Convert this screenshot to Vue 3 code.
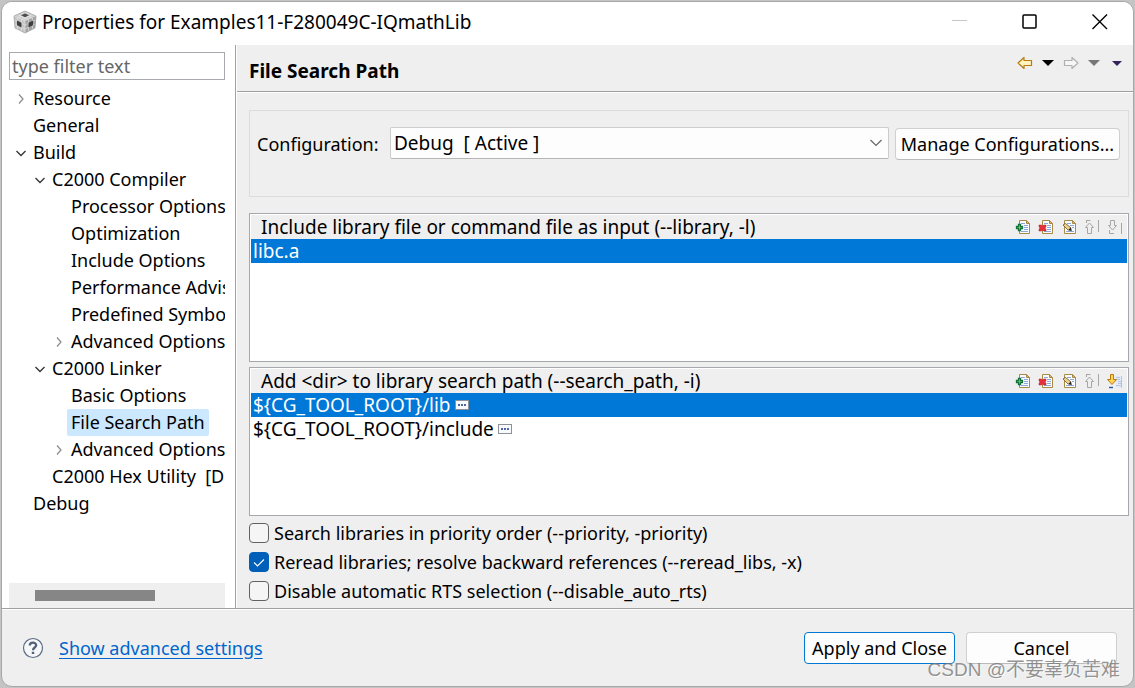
<script setup>
import { ref } from 'vue'

const filter = ref('')
const config = ref('debug')

const tree = [
  { label: 'Resource', level: 0, arrow: 'closed' },
  { label: 'General', level: 0 },
  { label: 'Build', level: 0, arrow: 'open' },
  { label: 'C2000 Compiler', level: 1, arrow: 'open' },
  { label: 'Processor Options', level: 2 },
  { label: 'Optimization', level: 2 },
  { label: 'Include Options', level: 2 },
  { label: 'Performance Advisor', level: 2 },
  { label: 'Predefined Symbols', level: 2 },
  { label: 'Advanced Options', level: 2, arrow: 'closed' },
  { label: 'C2000 Linker', level: 1, arrow: 'open' },
  { label: 'Basic Options', level: 2 },
  { label: 'File Search Path', level: 2, selected: true },
  { label: 'Advanced Options', level: 2, arrow: 'closed' },
  { label: 'C2000 Hex Utility \u00a0[Disabled]', level: 1 },
  { label: 'Debug', level: 0 },
]

const lists = [
  {
    title: 'Include library file or command file as input (--library, -l)',
    rows: [{ text: 'libc.a', selected: true }],
    canMoveDown: false,
  },
  {
    title: 'Add <dir> to library search path (--search_path, -i)',
    rows: [
      { text: '${CG_TOOL_ROOT}/lib', selected: true, variable: true },
      { text: '${CG_TOOL_ROOT}/include', variable: true },
    ],
    canMoveDown: true,
  },
]

const options = ref([
  { id: 'priority', label: 'Search libraries in priority order (--priority, -priority)', checked: false },
  { id: 'reread', label: 'Reread libraries; resolve backward references (--reread_libs, -x)', checked: true },
  { id: 'rts', label: 'Disable automatic RTS selection (--disable_auto_rts)', checked: false },
])
</script>

<template>
  <div class="desktop">
    <div class="window">
      <header class="titlebar">
        <svg class="app-icon" viewBox="0 0 24 24" aria-hidden="true">
          <path d="M12 1 23 6 12 11 1 6Z" fill="#cfcfcf" />
          <path d="M1 6 12 11V23L2 18Z" fill="#c6c6c6" />
          <path d="M23 6 12 11V23L22 18Z" fill="#a4a4a4" />
          <path d="M4.500 4.500 15.500 9.500M8 3 19 8M19.500 4.500 8.500 9.500M16 3 5 8M1.500 10 12 15 22.500 10M2 14 12 19 22 14M4.500 8V19M8.500 9.500V21M15.500 9.500V21M19.500 8V19M12 11V23" fill="none" stroke="#e9e9e9" stroke-width=".6" />
          <path d="M12 3.500 16 5.300 12 7.200 8 5.300Z" fill="#4c4c4c" />
          <path d="M4 10.500 8.500 12.800V17.500L4 15.200Z" fill="#3f3f3f" />
          <path d="M15.500 12.800 20 10.500V15.200L15.500 17.500Z" fill="#3f3f3f" />
          <path d="M1 6 12 1 23 6 22 18 12 23 2 18Z" fill="none" stroke="#999" stroke-width=".7" />
        </svg>
        <h1>Properties for Examples11-F280049C-IQmathLib</h1>
        <div class="caption-buttons">
          <button type="button" aria-label="Minimize" disabled>
            <svg viewBox="0 0 16 16"><path d="M0 6.500H15" stroke="#c6c6c6" /></svg>
          </button>
          <button type="button" aria-label="Maximize">
            <svg viewBox="0 0 16 16"><rect x="1" y="1" width="13" height="13" rx="1" fill="none" stroke="#000" stroke-width="1.500" /></svg>
          </button>
          <button type="button" aria-label="Close">
            <svg viewBox="0 0 16 16"><path d="M.5.5 15 15M15 .5.5 15" stroke="#000" stroke-width="1.400" /></svg>
          </button>
        </div>
      </header>

      <main class="body">
        <nav class="sidebar" aria-label="Categories">
          <input v-model="filter" class="filter" type="text" placeholder="type filter text" aria-label="Filter" />
          <ul class="tree">
            <li v-for="(item, i) in tree" :key="i" :class="'level-' + item.level">
              <span class="arrow">
                <svg v-if="item.arrow === 'closed'" viewBox="0 0 10 10"><path d="M3 .500 7 5 3 9.500" fill="none" stroke="#8a8a8a" stroke-width="1.200" /></svg>
                <svg v-else-if="item.arrow === 'open'" viewBox="0 0 10 10"><path d="M.500 3 5 7.500 9.500 3" fill="none" stroke="#333" stroke-width="1.300" /></svg>
              </span>
              <button type="button" :class="{ selected: item.selected }">{{ item.label }}</button>
            </li>
          </ul>
          <div class="scrollbar"><div class="thumb"></div></div>
        </nav>

        <section class="page">
          <div class="page-head">
            <h2>File Search Path</h2>
            <div class="history">
              <button type="button" aria-label="Back">
                <svg class="arrow-icon" viewBox="0 0 16 14"><path d="M1 7 7 1.500V4.500H14.500V9.500H7V12.500Z" fill="#fff3c0" stroke="#b97a10" stroke-width="1.200" stroke-linejoin="round" /></svg>
              </button>
              <button type="button" aria-label="Back history">
                <svg class="drop-icon" viewBox="0 0 12 6"><path d="M0 0H12L6 6Z" fill="#000" /></svg>
              </button>
              <button type="button" aria-label="Forward" disabled>
                <svg class="arrow-icon" viewBox="0 0 16 14"><path d="M15 7 9 1.500V4.500H1.500V9.500H9V12.500Z" fill="#f6f6f6" stroke="#b0b0b0" stroke-width="1.200" stroke-linejoin="round" /></svg>
              </button>
              <button type="button" aria-label="Forward history" disabled>
                <svg class="drop-icon" viewBox="0 0 12 6"><path d="M0 0H12L6 6Z" fill="#777" /></svg>
              </button>
              <button type="button" aria-label="View menu">
                <svg class="menu-icon" viewBox="0 0 10 5"><path d="M0 0H10L5 5Z" fill="#34245c" /></svg>
              </button>
            </div>
          </div>

          <div class="content">
            <div class="config">
              <label for="configuration">Configuration:</label>
              <div class="select-wrap">
                <select id="configuration" v-model="config">
                  <option value="debug">Debug&nbsp; [ Active ]</option>
                </select>
                <svg class="chevron" viewBox="0 0 12 8"><path d="M.500 1 6 6.500 11.500 1" fill="none" stroke="#666" stroke-width="1.200" /></svg>
              </div>
              <button type="button" class="push">Manage Configurations...</button>
            </div>

            <section v-for="list in lists" :key="list.title" class="list">
              <div class="list-head">
                <h3>{{ list.title }}</h3>
                <div class="tools">
                  <button type="button" aria-label="Add">
                    <svg viewBox="0 0 16 16">
                      <path d="M4.500 1.500H11.500L14.500 4.500V14.500H4.500Z" fill="#fbfcff" stroke="#a98a45" />
                      <path d="M11.500 1.500V4.500H14.500Z" fill="#e0b65c" stroke="#a98a45" />
                      <path d="M6 4.500H10M9 6.500H13M9 8.500H13M9 10.500H13M6 12.500H13" stroke="#8ba6d8" />
                      <path d="M3.500 5.500H5.500V7.500H7.500V9.500H5.500V11.500H3.500V9.500H1.500V7.500H3.500Z" fill="#8fdc70" stroke="#14703a" stroke-width="1.300" />
                    </svg>
                  </button>
                  <button type="button" aria-label="Delete">
                    <svg viewBox="0 0 16 16">
                      <path d="M4.500 1.500H11.500L14.500 4.500V14.500H4.500Z" fill="#fbfcff" stroke="#a98a45" />
                      <path d="M11.500 1.500V4.500H14.500Z" fill="#e0b65c" stroke="#a98a45" />
                      <path d="M6 4.500H10M9 6.500H13M9 8.500H13M9 10.500H13M6 12.500H13" stroke="#8ba6d8" />
                      <path d="M1 6H3.500L4.500 7.200 5.500 6H8V8L6.800 9 8 10V12H5.500L4.500 10.800 3.500 12H1V10L2.200 9 1 8Z" fill="#e8303c" stroke="#c01a24" stroke-width=".5" />
                    </svg>
                  </button>
                  <button type="button" aria-label="Edit">
                    <svg viewBox="0 0 16 16">
                      <path d="M3.500 1.500H11.500L14.500 4.500V14.500H3.500Z" fill="#fbfcff" stroke="#a98a45" />
                      <path d="M11.500 1.500V4.500H14.500Z" fill="#e0b65c" stroke="#a98a45" />
                      <path d="M6 4.500H10M9 6.500H13M11 8.500H13M5 12.500H13" stroke="#8ba6d8" />
                      <path d="M2 6 4.500 4.500 9.500 8.500 9.500 11.500 7 11Z" fill="#eed28e" stroke="#75603a" stroke-width=".9" />
                      <path d="M7.500 10.500 10 8.500 10.800 12.300Z" fill="#222" />
                    </svg>
                  </button>
                  <button type="button" aria-label="Move up" disabled>
                    <svg viewBox="0 0 16 16">
                      <path d="M2 1.500H6.500M2.500 2V4M14.500 1V13" stroke="#a6a6a6" fill="none" />
                      <path d="M5.500 4 9.500 8.500H7.500V14.500H3.500V8.500H1.500Z" fill="none" stroke="#a6a6a6" />
                    </svg>
                  </button>
                  <button type="button" aria-label="Move down" :disabled="!list.canMoveDown">
                    <svg v-if="list.canMoveDown" viewBox="0 0 16 16">
                      <path d="M8 3H15V15H8Z" fill="#e4ebfa" />
                      <path d="M9 4.500H13M9 6.500H13M11 8.500H14M11 10.500H14M9 12.500H14M14.500 3V15" stroke="#b4c3e2" />
                      <path d="M2 14.500H6" stroke="#24569c" stroke-width="1.400" />
                      <path d="M3.500 1.500H6.500V6.500H9.500L5 11.500.5 6.500H3.500Z" fill="#ffd653" stroke="#ba7a12" />
                    </svg>
                    <svg v-else viewBox="0 0 16 16">
                      <path d="M3.500 1.500H7.500V6.500H9.500L5.500 11 1.500 6.500H3.500Z" fill="none" stroke="#a6a6a6" />
                      <path d="M2.500 11V14.500H7M14.500 4V15" fill="none" stroke="#a6a6a6" />
                    </svg>
                  </button>
                </div>
              </div>
              <ul>
                <li v-for="row in list.rows" :key="row.text" :class="{ selected: row.selected }">
                  <span>{{ row.text }}</span>
                  <svg v-if="row.variable" class="variable" viewBox="0 0 14 10">
                    <rect x=".5" y=".5" width="13" height="9" fill="#f8faff" stroke="#8d9299" />
                    <path d="M3 4H5V6H3ZM6 4H8V6H6ZM9 4H11V6H9Z" fill="#4b68a8" />
                  </svg>
                </li>
              </ul>
            </section>

            <div class="options">
              <label v-for="option in options" :key="option.id" :for="option.id">
                <input :id="option.id" v-model="option.checked" type="checkbox" />
                <svg v-if="option.checked" class="tick" viewBox="0 0 20 20"><path d="M5 10.500 8.500 14 15 7.500" fill="none" stroke="#fff" stroke-width="1.100" /></svg>
                <span>{{ option.label }}</span>
              </label>
            </div>
          </div>
        </section>
      </main>

      <footer class="footer">
        <button type="button" class="help" aria-label="Help">
          <svg viewBox="0 0 22 22">
            <circle cx="11" cy="11" r="9.500" fill="#f6f7f9" stroke="#5d6c84" stroke-width="1.200" />
            <path d="M7.800 8.500C7.800 4.800 14.200 4.800 14.200 8.300 14.200 10.500 11 10.600 11 13.200" fill="none" stroke="#53627a" stroke-width="2.300" />
            <path d="M9.800 14.700H12.200V17H9.800Z" fill="#53627a" />
          </svg>
        </button>
        <a href="#">Show advanced settings</a>
        <div class="actions">
          <button type="button" class="push primary">Apply and Close</button>
          <button type="button" class="push">Cancel</button>
        </div>
      </footer>
    </div>
    <div class="watermark">CSDN @不要辜负苦难</div>
  </div>
</template>

<style>
body {
  margin: 0;
}
</style>

<style scoped>
.desktop {
  position: relative;
  display: flex;
  box-sizing: border-box;
  min-height: 100vh;
  padding: 1px;
  background: #c4c4c4;
  font-family: "Noto Sans", "Noto Sans CJK SC", sans-serif;
  font-size: 18px;
  line-height: 24px;
  color: #000;
}

.desktop * {
  box-sizing: border-box;
}

button,
input,
select {
  margin: 0;
  padding: 0;
  border: 0;
  background: none;
  font: inherit;
  color: inherit;
}

h1,
h2,
h3,
ul {
  margin: 0;
  padding: 0;
  font-size: 19px;
  font-weight: 400;
  list-style: none;
}

svg {
  display: block;
}

.window {
  flex: 1;
  min-width: 0;
  display: flex;
  flex-direction: column;
  overflow: hidden;
  border: 1px solid #a8a8a8;
  border-radius: 11px;
  background: #efefef;
}

.titlebar {
  display: flex;
  align-items: center;
  height: 43px;
  padding: 0 25px 3px 11px;
  background: #fff;
}

.app-icon {
  width: 24px;
  height: 24px;
  margin-right: 5px;
}

.caption-buttons {
  display: flex;
  gap: 54px;
  margin-left: auto;
}

.caption-buttons svg {
  width: 16px;
  height: 16px;
}

.body {
  flex: 1;
  display: flex;
  min-height: 0;
}

.sidebar {
  display: flex;
  flex-direction: column;
  width: 234px;
  flex: none;
  padding: 7px 10px 0 7px;
  border-right: 1px solid #a0a0a0;
  background: #fff;
}

.filter {
  height: 28px;
  flex: none;
  padding: 0 2px;
  border: 1px solid #a9a9b0;
}

.filter::placeholder {
  color: #666;
  opacity: 1;
}

.tree {
  flex: 1;
  margin-top: 5px;
  overflow: hidden;
  font-size: 18px;
}

.tree li {
  display: flex;
  align-items: center;
  height: 27px;
  white-space: nowrap;
}

.level-1 {
  padding-left: 19px;
}

.level-2 {
  padding-left: 38px;
}

.arrow {
  width: 20px;
  flex: none;
  padding-left: 7px;
}

.arrow svg {
  width: 10px;
  height: 10px;
}

.tree button {
  height: 27px;
  padding: 0 4px 2px;
  border-radius: 2px;
}

.tree button.selected {
  background: #cce8ff;
}

.scrollbar {
  height: 25px;
  flex: none;
  padding: 7px 70px 7px 26px;
  background: #efefef;
}

.thumb {
  height: 11px;
  background: #868686;
}

.page {
  flex: 1;
  min-width: 0;
  border-left: 1px solid #fff;
}

.page-head {
  display: flex;
  justify-content: space-between;
  height: 47px;
  padding: 0 5px 0 12px;
  border-bottom: 1px solid #a0a0a0;
}

.page-head h2 {
  font-weight: 700;
  line-height: 52px;
}

.history {
  display: flex;
  height: 36px;
}

.history button {
  display: flex;
  align-items: center;
  justify-content: center;
  width: 23px;
}

.arrow-icon {
  width: 16px;
  height: 14px;
}

.drop-icon {
  width: 12px;
  height: 6px;
}

.menu-icon {
  width: 10px;
  height: 5px;
}

.content {
  padding: 17px 4px 0 12px;
  border-top: 1px solid #fff;
}

.config {
  display: flex;
  height: 87px;
  padding: 16px 8px 0 7px;
  margin-bottom: 16px;
  border: 1px solid #dcdcdc;
}

.config label {
  width: 133px;
  flex: none;
  line-height: 34px;
}

.select-wrap {
  position: relative;
  flex: 1;
  margin-right: 6px;
}

select {
  appearance: none;
  width: 100%;
  height: 32px;
  padding: 0 3px;
  border: 1px solid #ccc;
  border-bottom-color: #b5b5b5;
  border-radius: 2px;
  background: #fdfdfd;
  font-size: 19px;
}

.chevron {
  position: absolute;
  top: 12px;
  right: 7px;
  width: 12px;
  height: 8px;
  pointer-events: none;
}

.push {
  height: 32px;
  border: 1px solid #d0d0d0;
  border-bottom-color: #bababa;
  border-radius: 4px;
  background: #fdfdfd;
  white-space: nowrap;
}

.config .push {
  width: 225px;
  margin-top: 1px;
}

.list {
  height: 149px;
  margin-bottom: 5px;
  padding: 1px;
  border: 1px solid #a5a8ad;
  background: #fff;
}

.list-head {
  display: flex;
  align-items: center;
  justify-content: space-between;
  height: 24px;
  padding: 0 4px 0 10px;
  background: #efefef;
}

.tools {
  display: flex;
  gap: 7px;
}

.tools svg {
  width: 16px;
  height: 16px;
}

.list li {
  display: flex;
  align-items: center;
  height: 24px;
  padding-left: 2px;
}

.list li.selected {
  background: #0078d7;
  color: #fff;
}

.variable {
  width: 14px;
  height: 10px;
  margin-left: 4px;
}

.options {
  margin-top: -3px;
}

.options label {
  position: relative;
  display: flex;
  align-items: center;
  gap: 5px;
  height: 29px;
}

.options input {
  appearance: none;
  width: 20px;
  height: 20px;
  border: 1px solid #626262;
  border-radius: 4px;
  background: #f5f5f5;
}

.options input:checked {
  border-color: #005fb8;
  background: #005fb8;
}

.tick {
  position: absolute;
  left: 0;
  width: 20px;
  height: 20px;
  pointer-events: none;
}

.footer {
  display: flex;
  align-items: center;
  height: 78px;
  padding: 0 16px 0 20px;
  border-top: 1px solid #a0a0a0;
  box-shadow: inset 0 1px #fff;
}

.help svg {
  width: 22px;
  height: 22px;
}

.footer a {
  margin-left: 15px;
  color: #0066cc;
  text-decoration: underline;
  text-underline-offset: 3px;
}

.actions {
  display: flex;
  gap: 11px;
  margin-left: auto;
}

.actions .push {
  width: 151px;
}

.push.primary {
  border-color: #0078d4;
}

.watermark {
  position: absolute;
  right: 15px;
  bottom: 6px;
  color: rgba(120, 120, 120, 0.8);
  text-shadow: 1px 1px rgba(255, 255, 255, 0.7);
  font-family: "Liberation Sans", "Noto Sans CJK SC", sans-serif;
  font-size: 19px;
  pointer-events: none;
}
</style>
